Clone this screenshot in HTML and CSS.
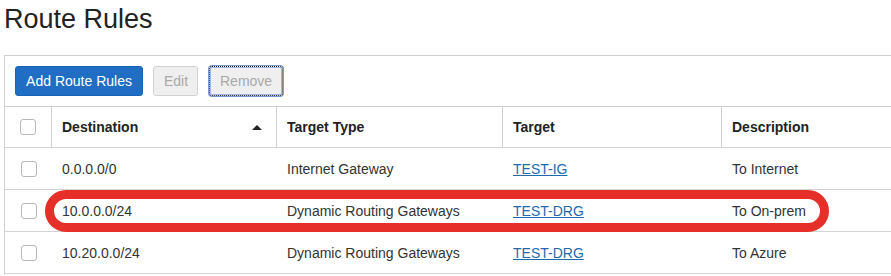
FILE: index.html
```html
<!DOCTYPE html>
<html>
<head>
<meta charset="utf-8">
<link rel="stylesheet" href="styles.css">
</head>
<body>
<h1 class="title">Route Rules</h1>
<section class="panel">
  <div class="toolbar">
    <button class="btn btn-primary">Add Route Rules</button>
    <button class="btn btn-disabled">Edit</button>
    <button class="btn btn-disabled btn-focus">Remove</button>
  </div>
  <div class="table">
    <div class="row head">
      <div class="cell check"><span class="box"></span></div>
      <div class="cell sort">Destination <span class="arrow"></span></div>
      <div class="cell">Target Type</div>
      <div class="cell">Target</div>
      <div class="cell last">Description</div>
    </div>
    <div class="row">
      <div class="cell check"><span class="box"></span></div>
      <div class="cell">0.0.0.0/0</div>
      <div class="cell">Internet Gateway</div>
      <div class="cell"><a class="link" href="#">TEST-IG</a></div>
      <div class="cell last">To Internet</div>
    </div>
    <div class="row">
      <div class="cell check"><span class="box"></span></div>
      <div class="cell">10.0.0.0/24</div>
      <div class="cell">Dynamic Routing Gateways</div>
      <div class="cell"><a class="link" href="#">TEST-DRG</a></div>
      <div class="cell last">To On-prem</div>
    </div>
    <div class="row">
      <div class="cell check"><span class="box"></span></div>
      <div class="cell">10.20.0.0/24</div>
      <div class="cell">Dynamic Routing Gateways</div>
      <div class="cell"><a class="link" href="#">TEST-DRG</a></div>
      <div class="cell last">To Azure</div>
    </div>
    <div class="highlight"></div>
  </div>
</section>
</body>
</html>
```
FILE: styles.css
```css
* { box-sizing: border-box; }
html, body { margin: 0; padding: 0; background: #fff; }
body {
  font-family: "Liberation Sans", Arial, Helvetica, sans-serif;
  color: #333;
  font-size: 14px;
  overflow: hidden;
}
.title {
  margin: 0;
  padding: 3px 0 0 4px;
  font-size: 27px;
  line-height: 32px;
  font-weight: normal;
  color: #222;
}
.panel {
  margin: 20px 0 0 4px;
  border-left: 1px solid #cfcfcf;
  border-top: 1px solid #cfcfcf;
}
.toolbar {
  display: flex;
  align-items: center;
  padding: 10px;
  height: 50px;
}
.btn {
  font-family: inherit;
  font-size: 14px;
  height: 30px;
  line-height: 28px;
  padding: 0 10px;
  border-radius: 3px;
  margin: 0;
}
.btn-primary {
  background: #1f6ec4;
  border: 1px solid #1a64b5;
  color: #fff;
  padding: 0 10px;
  width: 128px;
}
.btn-disabled {
  background: #efefef;
  border: 1px solid #d2d2d2;
  color: #a9a9a9;
  margin-left: 10px;
  width: 45px;
}
.btn-focus {
  margin-left: 11px;
  width: 74px;
  height: 30px;
  border: 1px dotted #1b1b1b;
  box-shadow: 0 0 0 1px #7a9bd3, inset 0 0 0 1px #9db5e0;
}
.table {
  position: relative;
  border-top: 1px solid #cfcfcf;
}
.row {
  display: grid;
  grid-template-columns: 47px 225px 226px 219px 1fr;
  height: 42px;
  border-bottom: 1px solid #d4d4d4;
}
.row.head {
  height: 41px;
  font-weight: bold;
  color: #222;
}
.cell {
  display: flex;
  align-items: center;
  padding: 0 10px;
  white-space: nowrap;
}
.head .cell { border-right: 1px solid #cfcfcf; }
.head .cell.last { border-right: none; }
.cell.check {
  justify-content: center;
  padding: 0;
}
.box {
  width: 16px;
  height: 16px;
  border: 1px solid #b8b8b8;
  border-radius: 3px;
  background: #fff;
}
.cell.sort {
  justify-content: space-between;
  padding-right: 14px;
}
.arrow {
  width: 0;
  height: 0;
  border-left: 5px solid transparent;
  border-right: 5px solid transparent;
  border-bottom: 5px solid #222;
}
.link {
  color: #1f6aad;
  text-decoration: underline;
}
.highlight {
  position: absolute;
  left: 40px;
  top: 83px;
  width: 784px;
  height: 42px;
  border: 9px solid #e52f28;
  border-radius: 21px;
  pointer-events: none;
}
```
